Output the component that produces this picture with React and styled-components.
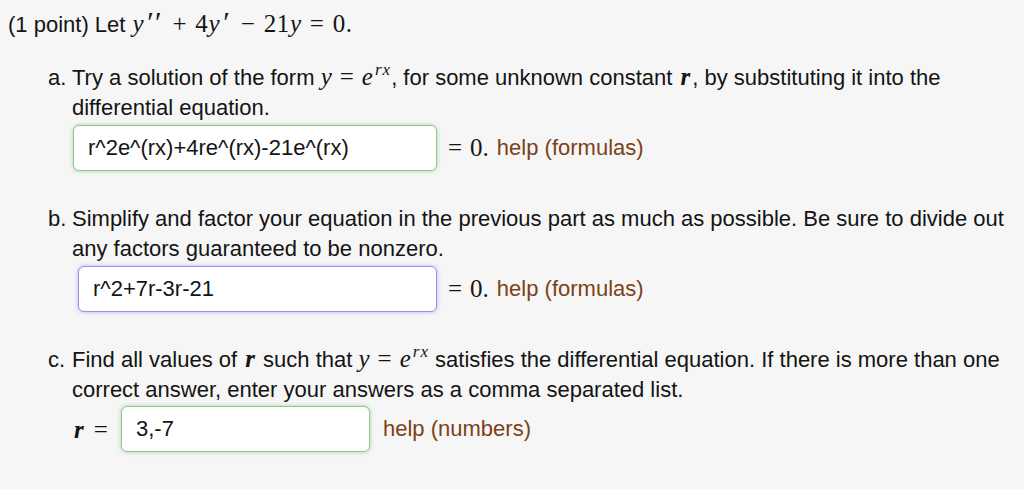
import React from 'react';
import styled, { createGlobalStyle } from 'styled-components';

const GlobalStyle = createGlobalStyle`
  html, body {
    margin: 0;
    padding: 0;
    background: #f6f6f6;
  }
  body {
    font-family: "Liberation Sans", Arial, sans-serif;
    color: #141414;
  }
`;

const serif = '"Liberation Serif", "Times New Roman", serif';

const Page = styled.div`
  padding: 7px 8px 30px;
`;

const Title = styled.div`
  font-size: 22px;
  line-height: 30px;
  white-space: nowrap;
  margin-bottom: 23px;
`;

const MathText = styled.span`
  font-family: ${serif};
  font-size: 25px;
  line-height: 1;
  letter-spacing: 0.7px;
  margin-left: 1px;
`;

const MathVar = styled.span`
  font-family: ${serif};
  font-style: italic;
  font-size: 25px;
  line-height: 1;
  font-weight: ${(p) => (p.$bold ? 700 : 400)};
  margin: 0 ${(p) => (p.$bold ? 2 : 0)}px;
`;

const Prime = styled.span`
  font-family: ${serif};
  font-size: 30px;
  line-height: 1;
  margin: 0 2px 0 3px;
  letter-spacing: 1px;
`;

const Op = styled.span`
  font-family: ${serif};
  font-size: 25px;
  line-height: 1;
  margin: 0 8px;
`;

const Sup = styled.sup`
  font-size: 17px;
  line-height: 0;
  vertical-align: 10px;
  margin-left: 2px;
  letter-spacing: 1px;
`;

const Part = styled.div`
  display: flex;
  padding-left: 40px;
  margin-bottom: 33px;
`;

const Label = styled.div`
  width: 24px;
  flex: none;
  font-size: 22px;
  line-height: 30px;
`;

const Body = styled.div`
  display: flex;
  flex-direction: column;
`;

const Line = styled.div`
  font-size: 22px;
  line-height: 30px;
  white-space: nowrap;
`;

const AnswerRow = styled.div`
  display: flex;
  align-items: center;
  margin-top: ${(p) => p.$gap}px;
  padding-left: ${(p) => p.$indent}px;
`;

const Prefix = styled.span`
  width: 49px;
  flex: none;
  white-space: nowrap;
  margin-left: -1px;
`;

const tones = {
  green: { border: '#8dc98a', glow: 'rgba(110, 180, 105, 0.55)' },
  blue: { border: '#9494e2', glow: 'rgba(120, 120, 225, 0.5)' },
};

const AnswerBox = styled.input`
  box-sizing: border-box;
  width: ${(p) => p.$width}px;
  height: 46px;
  padding: 0 10px 0 14px;
  border: 1px solid ${(p) => tones[p.$tone].border};
  border-radius: 6px;
  box-shadow: 0 0 4px ${(p) => tones[p.$tone].glow};
  background: #fff;
  font-family: "Liberation Sans", Arial, sans-serif;
  font-size: 22px;
  color: #141414;
  outline: none;
`;

const Equals = styled.span`
  font-family: ${serif};
  font-size: 25px;
  margin-left: 3px;
  white-space: nowrap;
`;

const Help = styled.span`
  color: #7b4217;
  font-size: 22px;
  margin-left: ${(p) => (p.$wide ? 13 : 8)}px;
  white-space: nowrap;
`;

function M({ bold, children }) {
  return <MathVar $bold={bold}>{children}</MathVar>;
}

const getParts = () => [
  {
    label: 'a.',
    lines: [
      <>
        Try a solution of the form <M>y</M><Op>=</Op><M>e<Sup>rx</Sup></M>, for some unknown constant{' '}
        <M bold>r</M>, by substituting it into the
      </>,
      'differential equation.',
    ],
    answer: 'r^2e^(rx)+4re^(rx)-21e^(rx)',
    tone: 'green',
    indent: 1,
    gap: 2,
    width: 364,
    eq: true,
    help: 'help (formulas)',
  },
  {
    label: 'b.',
    lines: [
      'Simplify and factor your equation in the previous part as much as possible. Be sure to divide out',
      'any factors guaranteed to be nonzero.',
    ],
    answer: 'r^2+7r-3r-21',
    tone: 'blue',
    indent: 6,
    gap: 2,
    width: 359,
    eq: true,
    help: 'help (formulas)',
  },
  {
    label: 'c.',
    lines: [
      <>
        Find all values of <M bold>r</M> such that <M>y</M><Op>=</Op><M>e<Sup>rx</Sup></M> satisfies the
        differential equation. If there is more than one
      </>,
      'correct answer, enter your answers as a comma separated list.',
    ],
    answer: '3,-7',
    tone: 'green',
    indent: 1,
    gap: 1,
    width: 249,
    prefix: true,
    help: 'help (numbers)',
  },
];

const App = () => (
  <>
    <GlobalStyle />
    <Page>
      <Title>
        (1 point) Let{' '}
        <MathText>
          <M>y</M>
          <Prime>′′</Prime>
          <Op>+</Op>4<M>y</M>
          <Prime>′</Prime>
          <Op>−</Op>21<M>y</M>
          <Op>=</Op>0.
        </MathText>
      </Title>

      {getParts().map((part) => (
        <Part key={part.label}>
          <Label>{part.label}</Label>
          <Body>
            {part.lines.map((line, i) => (
              <Line key={i}>{line}</Line>
            ))}
            <AnswerRow $indent={part.indent} $gap={part.gap}>
              {part.prefix && (
                <Prefix>
                  <M bold>r</M>
                  <Op>=</Op>
                </Prefix>
              )}
              <AnswerBox readOnly value={part.answer} $tone={part.tone} $width={part.width} />
              {part.eq && (
                <Equals>
                  <Op>=</Op>0.
                </Equals>
              )}
              <Help $wide={!part.eq}>{part.help}</Help>
            </AnswerRow>
          </Body>
        </Part>
      ))}
    </Page>
  </>
);

export default App;
